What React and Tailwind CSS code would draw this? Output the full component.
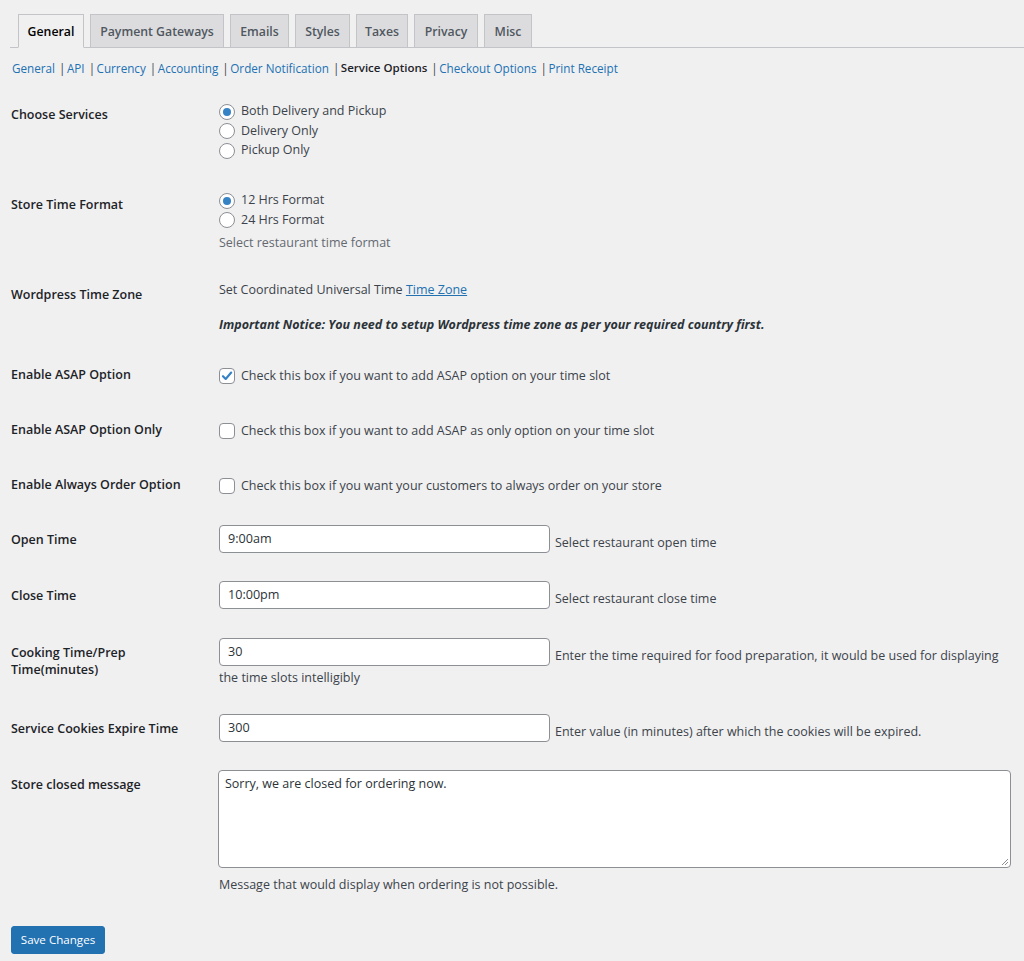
import React from "react";

const tabs = ["General", "Payment Gateways", "Emails", "Styles", "Taxes", "Privacy", "Misc"];
const tabWidths = {
  General: "w-[66px]",
  "Payment Gateways": "w-[134px]",
  Emails: "w-[59px]",
  Styles: "w-[55px]",
  Taxes: "w-[52px]",
  Privacy: "w-[64px]",
  Misc: "w-[48px]",
};

const subLinks = [
  "General",
  "API",
  "Currency",
  "Accounting",
  "Order Notification",
  "Service Options",
  "Checkout Options",
  "Print Receipt",
];

function Radio({ checked, label }) {
  return (
    <label className="flex items-center h-[19.5px]">
      <span className="w-4 h-4 shrink-0 rounded-full border border-[#8c8f94] bg-white flex items-center justify-center mr-[6px]">
        {checked && <span className="w-2 h-2 rounded-full bg-[#3582c4]" />}
      </span>
      <span>{label}</span>
    </label>
  );
}

function Checkbox({ checked, label }) {
  return (
    <label className="flex items-center h-[18px]">
      <span className="w-4 h-4 shrink-0 rounded-[4px] border border-[#8c8f94] bg-white flex items-center justify-center mr-[6px]">
        {checked && (
          <svg width="14" height="14" viewBox="0 0 16 16">
            <path d="M3.4 8.2 L6.5 11.4 L12.8 4" fill="none" stroke="#3582c4" strokeWidth="2.4" strokeLinecap="round" strokeLinejoin="round" />
          </svg>
        )}
      </span>
      <span>{label}</span>
    </label>
  );
}

function Row({ label, height, contentTop = "pt-[15px]", labelClass = "leading-[18px]", children }) {
  return (
    <div className={`flex ${height}`}>
      <div className={`w-[208px] shrink-0 pt-[21px] text-[12.5px] font-semibold text-[#1d2327] ${labelClass}`}>
        {label}
      </div>
      <div className={`flex-1 ${contentTop}`}>{children}</div>
    </div>
  );
}

function TextField({ value, note }) {
  return (
    <div className="flex items-start">
      <div className="w-[331px] h-[28px] shrink-0 rounded-[4px] border border-[#8c8f94] bg-white px-[8px] pt-[1px] flex items-center text-[12.6px] text-[#2c3338]">
        {value}
      </div>
      {note && <span className="ml-[5px] mt-[9px] leading-[18px] whitespace-nowrap">{note}</span>}
    </div>
  );
}

export default function App() {
  return (
    <div className="min-h-screen bg-[#f0f0f1] font-['Open_Sans',sans-serif] text-[12.5px] text-[#3c434a] overflow-hidden">
      {/* settings tabs */}
      <div className="pt-[14px] ml-[10px] border-b border-[#c3c4c7] flex gap-[6px] pl-[8px] h-[48px]">
        {tabs.map((t, i) => (
          <div
            key={t}
            className={`${tabWidths[t]} h-[34px] pt-[2px] flex items-center justify-center whitespace-nowrap text-[12.3px] font-semibold border border-[#c3c4c7] ${
              i === 0
                ? "bg-[#f0f0f1] text-black border-b-[#f0f0f1]"
                : "bg-[#dcdcde] text-[#50575e]"
            }`}
          >
            {t}
          </div>
        ))}
      </div>

      {/* section links */}
      <div className="mt-[11px] ml-[12px] leading-[18px] flex whitespace-nowrap text-[11.7px]">
        {subLinks.map((l, i) => (
          <span key={l} className="flex">
            {i > 0 && <span className="text-[#3c434a] ml-[4px] mr-[1.5px]">|</span>}
            {l === "Service Options" ? (
              <span className="font-semibold text-[#1d2327] text-[11.5px]">{l}</span>
            ) : (
              <span className="text-[#2271b1]">{l}</span>
            )}
          </span>
        ))}
      </div>

      <div className="mt-[8px] pl-[11px] pr-[13px]">
        <Row label="Choose Services" height="h-[90px]" contentTop="pt-[17px]">
          <Radio checked label="Both Delivery and Pickup" />
          <Radio label="Delivery Only" />
          <Radio label="Pickup Only" />
        </Row>

        <Row label="Store Time Format" height="h-[90px]" contentTop="pt-[16px]">
          <Radio checked label="12 Hrs Format" />
          <Radio label="24 Hrs Format" />
          <p className="mt-[4px] leading-[18px] text-[#646970]">Select restaurant time format</p>
        </Row>

        <Row label="Wordpress Time Zone" height="h-[80px]" contentTop="pt-[16px]">
          <p className="leading-[18px]">
            Set Coordinated Universal Time{" "}
            <a className="text-[#2271b1] underline">Time Zone</a>
          </p>
          <p className="mt-[17px] leading-[18px] italic font-bold text-[#2c3338]">
            Important Notice: You need to setup Wordpress time zone as per your required country first.
          </p>
        </Row>

        <Row label="Enable ASAP Option" height="h-[55px]" contentTop="pt-[22px]">
          <Checkbox checked label="Check this box if you want to add ASAP option on your time slot" />
        </Row>

        <Row label="Enable ASAP Option Only" height="h-[55px]" contentTop="pt-[22px]">
          <Checkbox label="Check this box if you want to add ASAP as only option on your time slot" />
        </Row>

        <Row label="Enable Always Order Option" height="h-[55px]" contentTop="pt-[22px]">
          <Checkbox label="Check this box if you want your customers to always order on your store" />
        </Row>

        <Row label="Open Time" height="h-[56px]">
          <TextField value="9:00am" note="Select restaurant open time" />
        </Row>

        <Row label="Close Time" height="h-[57px]">
          <TextField value="10:00pm" note="Select restaurant close time" />
        </Row>

        <Row label="Cooking Time/Prep Time(minutes)" height="h-[76px]" labelClass="leading-[17px] pr-[40px]">
          <TextField
            value="30"
            note="Enter the time required for food preparation, it would be used for displaying"
          />
          <p className="mt-[3px] leading-[18px]">the time slots intelligibly</p>
        </Row>

        <Row label="Service Cookies Expire Time" height="h-[56px]">
          <TextField value="300" note="Enter value (in minutes) after which the cookies will be expired." />
        </Row>

        <Row label="Store closed message" height="h-[145px]">
          <div className="relative w-[793px] h-[98px] -ml-[1px] rounded-[4px] border border-[#8c8f94] bg-white px-[6px] py-[4px] text-[12.5px] text-[#2c3338] leading-[18px]">
            Sorry, we are closed for ordering now.
            <svg className="absolute right-[1px] bottom-[1px]" width="9" height="9" viewBox="0 0 9 9">
              <path d="M8 2 L2 8 M8 5 L5 8" stroke="#8c8f94" strokeWidth="1" />
            </svg>
          </div>
          <p className="mt-[8px] leading-[18px]">Message that would display when ordering is not possible.</p>
        </Row>

        <button className="mt-[26px] h-[28px] w-[94px] rounded-[3px] bg-[#2271b1] border border-[#2271b1] text-white text-[11.6px]">
          Save Changes
        </button>
      </div>
    </div>
  );
}
